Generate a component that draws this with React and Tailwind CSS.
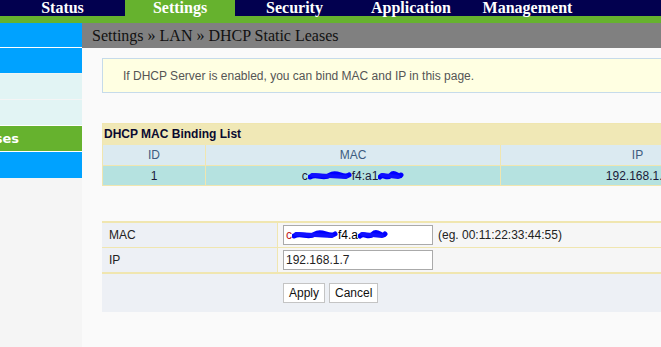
import React from "react";

const navItems = [
  { label: "Status", w: "w-[125px]" },
  { label: "Settings", w: "w-[110px]", active: true },
  { label: "Security", w: "w-[119px]" },
  { label: "Application", w: "w-[114px]" },
  { label: "Management", w: "w-[119px]" },
];

function Scribble({ w = 50 }) {
  // redaction scribble drawn over the MAC address
  return (
    <svg width={w} height="12" viewBox={`0 0 ${w} 12`} className="inline-block">
      <path
        d={`M2 7 C ${w * 0.2} 3, ${w * 0.35} 10, ${w * 0.5} 5 S ${w * 0.8} 9, ${w - 3} 5`}
        stroke="#0000ff"
        strokeWidth="5"
        strokeLinecap="round"
        fill="none"
      />
      <path
        d={`M4 5 L ${w - 6} 7`}
        stroke="#1010ff"
        strokeWidth="4"
        strokeLinecap="round"
        fill="none"
      />
    </svg>
  );
}

export default function App() {
  return (
    <div className="w-[661px] h-[347px] overflow-hidden bg-[#fafafa] font-['Liberation_Sans',Arial,sans-serif] text-[12px]">
      {/* top menu */}
      <div className="flex h-4 bg-[#02004f] font-['Liberation_Serif',serif] font-bold text-[16px] leading-4 text-white">
        {navItems.map((item) => (
          <div
            key={item.label}
            className={`${item.w} shrink-0 text-center ${item.active ? "bg-[#66b22e]" : ""}`}
          >
            {item.label}
          </div>
        ))}
      </div>
      <div className="h-[7px] bg-[#66b22e]" />

      <div className="flex">
        {/* left menu */}
        <div className="w-[82px] shrink-0 h-[324px] bg-[#f5f5f5] flex flex-col">
          <div className="h-[25px] bg-[#00a2ff] border-b border-white" />
          <div className="h-[26px] bg-[#00a2ff] border-b border-[#f0f4f4]" />
          <div className="h-[26px] bg-[#e2f4f4] border-b border-[#f4f4f4]" />
          <div className="h-[26px] bg-[#e2f4f4] border-b border-white" />
          <div className="h-[26px] bg-[#66b22e] border-b border-white flex items-center justify-end pr-[63px] overflow-hidden text-white font-bold text-[13px] font-['DejaVu_Sans',sans-serif] whitespace-nowrap">
            <span className="shrink-0">Leases</span>
          </div>
          <div className="h-[26px] bg-[#00a2ff]" />
        </div>

        {/* main */}
        <div className="flex-1 min-w-0">
          <div className="h-[25px] bg-[#808080] pl-[10px] font-['Liberation_Serif',serif] text-[16px] leading-[25px] text-[#111] whitespace-nowrap">
            Settings » LAN » DHCP Static Leases
          </div>

          <div className="pl-5 pt-[10px] w-[720px]">
            <div className="h-[35px] bg-[#ffffe2] border border-[#c6dbea] pl-5 flex items-center text-[#555]">
              If DHCP Server is enabled, you can bind MAC and IP in this page.
            </div>

            {/* binding list */}
            <div className="mt-[30px] w-[673px] border border-[#f0e6b0]">
              <div className="h-[21px] bg-[#f0e8b6] pl-[1px] font-bold leading-[21px] text-[#0a0a30]">
                DHCP MAC Binding List
              </div>
              <div className="flex h-5 bg-[#dbeaf1] text-[#3d5c80] leading-5 text-center">
                <div className="w-[103px] border-r border-[#f0e6b0]">ID</div>
                <div className="w-[295px] border-r border-[#f0e6b0]">MAC</div>
                <div className="flex-1">IP</div>
              </div>
              <div className="flex h-5 bg-[#b5e2e0] border-t border-[#f0e6b0] text-[#1a1a3a] leading-5 text-center">
                <div className="w-[103px] border-r border-[#f0e6b0]">1</div>
                <div className="w-[295px] border-r border-[#f0e6b0] flex items-center justify-center">
                  <span>c</span>
                  <Scribble w={44} />
                  <span>f4:a1</span>
                  <Scribble w={26} />
                </div>
                <div className="flex-1">192.168.1.7</div>
              </div>
            </div>

            {/* edit form */}
            <div className="mt-[35px] border-t-2 border-b-2 border-[#f0e6b0]">
              <div className="flex h-[25px] border-b border-[#f0e6b0]">
                <div className="w-[175px] bg-[#edf0f5] pl-[7px] flex items-center text-[#222]">MAC</div>
                <div className="flex-1 bg-[#f6f6f6] border-l border-[#f0e6b0] pl-[5px] flex items-center gap-[5px]">
                  <div className="w-[150px] h-5 bg-white border border-[#aaaaaa] flex items-center pl-[2px]">
                    <span className="text-[#c02020]">c</span>
                    <Scribble w={46} />
                    <span>f4.a</span>
                    <Scribble w={30} />
                  </div>
                  <span className="text-[#222]">(eg. 00:11:22:33:44:55)</span>
                </div>
              </div>
              <div className="flex h-[24px]">
                <div className="w-[175px] bg-[#edf0f5] pl-[7px] flex items-center text-[#222]">IP</div>
                <div className="flex-1 bg-[#f6f6f6] border-l border-[#f0e6b0] pl-[5px] flex items-center">
                  <div className="w-[150px] h-5 bg-white border border-[#aaaaaa] flex items-center pl-[2px] text-[#222]">
                    192.168.1.7
                  </div>
                </div>
              </div>
            </div>
            <div className="h-[38px] bg-[#edf0f5] pl-[181px] pt-[9px] flex items-start gap-1">
              <button className="h-5 px-[5px] bg-white border border-[#c4c4c4] text-[12px] leading-none text-[#111]">
                Apply
              </button>
              <button className="h-5 px-[5px] bg-white border border-[#c4c4c4] text-[12px] leading-none text-[#111]">
                Cancel
              </button>
            </div>
          </div>
        </div>
      </div>
    </div>
  );
}
